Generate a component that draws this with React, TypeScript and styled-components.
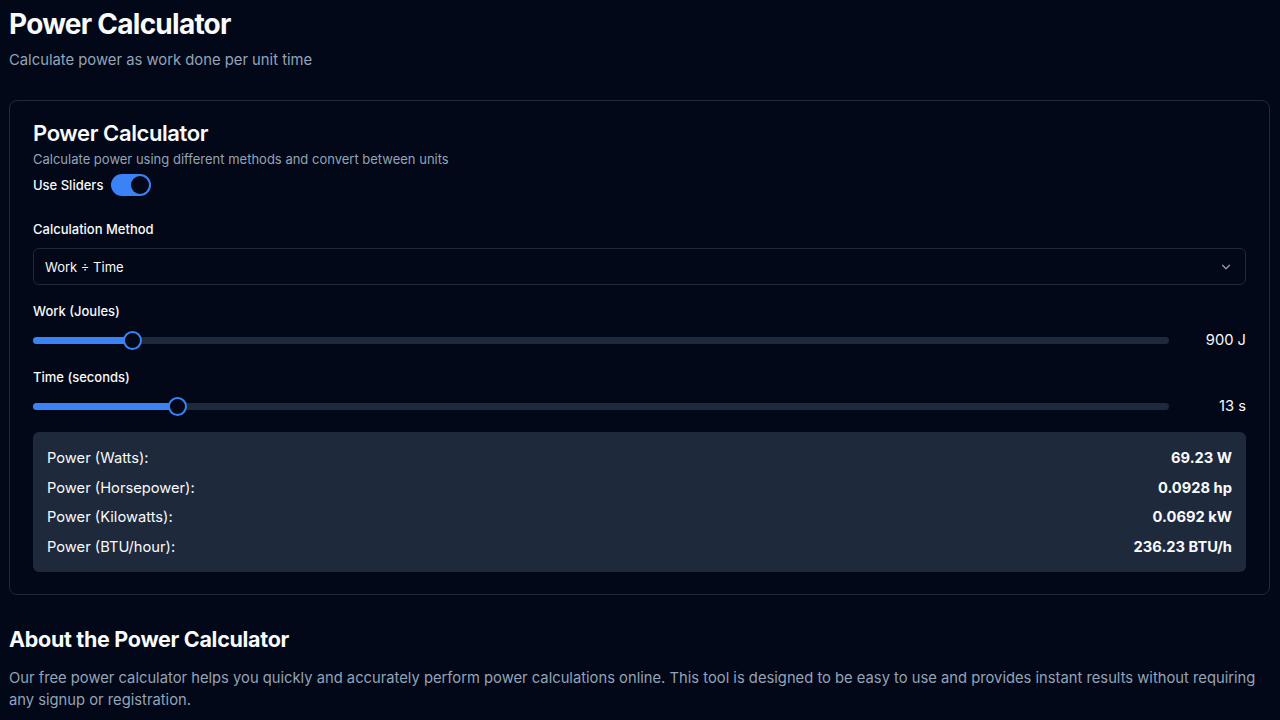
import { useState } from 'react';
import styled, { createGlobalStyle } from 'styled-components';

const GlobalStyle = createGlobalStyle`
  html, body {
    margin: 0;
    padding: 0;
    background: #020817;
    color: #f8fafc;
    font-family: Inter, 'Noto Sans', 'Liberation Sans', sans-serif;
  }
  * { box-sizing: border-box; }
`;

const Page = styled.div`
  padding: 4px 10px 0 9px;
  display: flex;
  flex-direction: column;
`;

const PageTitle = styled.h1`
  margin: 0;
  font-size: 28px;
  line-height: 40px;
  font-weight: 700;
  letter-spacing: -0.75px;
`;

const PageSubtitle = styled.p`
  margin: 4px 0 0;
  font-size: 14.8px;
  line-height: 24px;
  color: #94a3b8;
`;

const Card = styled.div`
  margin-top: 28px;
  border: 1px solid #1e293b;
  border-radius: 8px;
  padding: 18px 23px 22px;
  display: flex;
  flex-direction: column;
`;

const CardTitle = styled.h2`
  margin: 0;
  font-size: 22px;
  line-height: 28px;
  font-weight: 600;
  letter-spacing: -0.4px;
`;

const CardDescription = styled.p`
  margin: 3px 0 0;
  font-size: 13px;
  line-height: 18px;
  color: #94a3b8;
`;

const ToggleRow = styled.label`
  display: flex;
  align-items: center;
  gap: 8px;
  margin-top: 6px;
  font-size: 13px;
  font-weight: 500;
  cursor: pointer;
`;

const Switch = styled.button<{ $on: boolean }>`
  width: 40px;
  height: 22px;
  border-radius: 999px;
  border: none;
  padding: 2px;
  background: ${p => (p.$on ? '#3b82f6' : '#1e293b')};
  display: flex;
  justify-content: ${p => (p.$on ? 'flex-end' : 'flex-start')};
  cursor: pointer;
`;

const Knob = styled.span`
  width: 18px;
  height: 18px;
  border-radius: 50%;
  background: #020817;
`;

const FieldLabel = styled.div<{ $top: number }>`
  margin-top: ${p => p.$top}px;
  font-size: 13px;
  line-height: 18px;
  font-weight: 500;
`;

const SelectBox = styled.div`
  margin-top: 10px;
  height: 37px;
  border: 1px solid #1e293b;
  border-radius: 6px;
  padding: 0 12px 0 11px;
  display: flex;
  align-items: center;
  justify-content: space-between;
  font-size: 13px;
`;

const SliderRow = styled.div`
  margin-top: 11px;
  display: flex;
  align-items: center;
  gap: 13px;
`;

const Track = styled.div`
  position: relative;
  flex: 1;
  height: 7px;
  border-radius: 999px;
  background: #1e293b;
`;

const Fill = styled.div`
  position: absolute;
  left: 0;
  top: 0;
  bottom: 0;
  border-radius: 999px;
  background: #3b82f6;
`;

const Thumb = styled.div`
  position: absolute;
  top: 50%;
  width: 19px;
  height: 19px;
  margin-left: -9.5px;
  margin-top: -9.5px;
  border-radius: 50%;
  border: 2px solid #3b82f6;
  background: #020817;
`;

const SliderValue = styled.div`
  width: 64px;
  text-align: right;
  font-size: 14.7px;
`;

const Results = styled.div`
  margin-top: 17px;
  background: #1e293b;
  border-radius: 6px;
  padding: 16px 14px 14px;
  display: flex;
  flex-direction: column;
  gap: 8px;
`;

const ResultRow = styled.div`
  display: flex;
  justify-content: space-between;
  font-size: 14.7px;
  line-height: 21.5px;
`;

const ResultValue = styled.span`
  font-weight: 700;
`;

const AboutTitle = styled.h2`
  margin: 29px 0 0;
  font-size: 21.5px;
  line-height: 30px;
  font-weight: 700;
  letter-spacing: -0.3px;
`;

const AboutText = styled.p`
  margin: 13px 0 0;
  font-size: 14.75px;
  line-height: 22px;
  color: #94a3b8;
`;

const Slider = ({ pct, value }: { pct: number; value: string }) => (
  <SliderRow>
    <Track>
      <Fill style={{ width: `${pct}%` }} />
      <Thumb style={{ left: `${pct}%` }} />
    </Track>
    <SliderValue>{value}</SliderValue>
  </SliderRow>
);

const results = [
  { label: 'Power (Watts):', value: '69.23 W' },
  { label: 'Power (Horsepower):', value: '0.0928 hp' },
  { label: 'Power (Kilowatts):', value: '0.0692 kW' },
  { label: 'Power (BTU/hour):', value: '236.23 BTU/h' },
];

export default function App() {
  const [sliders, setSliders] = useState(true);

  return (
    <>
      <GlobalStyle />
      <Page>
        <PageTitle>Power Calculator</PageTitle>
        <PageSubtitle>Calculate power as work done per unit time</PageSubtitle>

        <Card>
          <CardTitle>Power Calculator</CardTitle>
          <CardDescription>Calculate power using different methods and convert between units</CardDescription>
          <ToggleRow>
            Use Sliders
            <Switch $on={sliders} onClick={() => setSliders(!sliders)}>
              <Knob />
            </Switch>
          </ToggleRow>

          <FieldLabel $top={24}>Calculation Method</FieldLabel>
          <SelectBox>
            <span>Work ÷ Time</span>
            <svg width="14" height="14" viewBox="0 0 24 24" fill="none" stroke="#94a3b8" strokeWidth="2" strokeLinecap="round" strokeLinejoin="round">
              <path d="m6 9 6 6 6-6" />
            </svg>
          </SelectBox>

          <FieldLabel $top={17}>Work (Joules)</FieldLabel>
          <Slider pct={8.8} value="900 J" />

          <FieldLabel $top={19}>Time (seconds)</FieldLabel>
          <Slider pct={12.7} value="13 s" />

          <Results>
            {results.map(r => (
              <ResultRow key={r.label}>
                <span>{r.label}</span>
                <ResultValue>{r.value}</ResultValue>
              </ResultRow>
            ))}
          </Results>
        </Card>

        <AboutTitle>About the Power Calculator</AboutTitle>
        <AboutText>
          Our free power calculator helps you quickly and accurately perform power calculations online. This tool is
          designed to be easy to use and provides instant results without requiring any signup or registration.
        </AboutText>
      </Page>
    </>
  );
}
